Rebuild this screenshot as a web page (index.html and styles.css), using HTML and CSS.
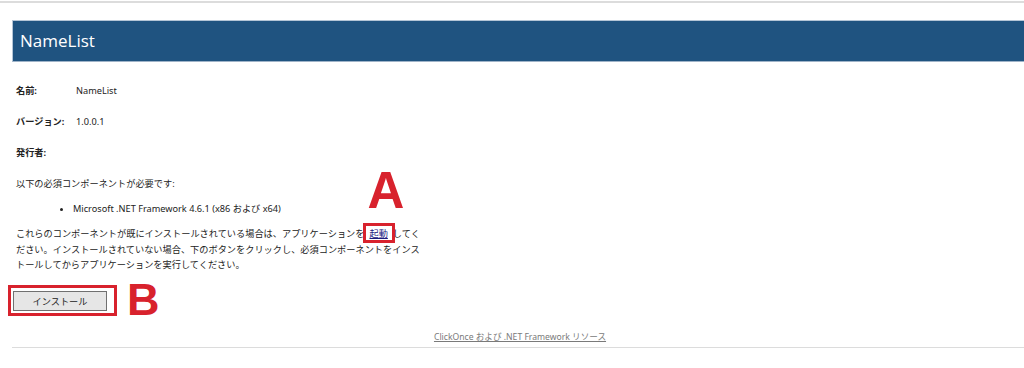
FILE: index.html
```html
<html lang="ja">
<head>
    <meta charset="UTF-8">
    <meta name="viewport" content="width=device-width, initial-scale=1.0">
    <title>NameList</title>
    <link rel="stylesheet" href="styles.css">
</head>
<body>
    <div class="top-rule"></div>
    <main class="page">
        <header class="banner">
            <h1>NameList</h1>
        </header>
        <div class="info">
            <div class="info-row"><span class="label">名前:</span><span class="value">NameList</span></div>
            <div class="info-row"><span class="label">バージョン:</span><span class="value">1.0.0.1</span></div>
            <div class="info-row"><span class="label">発行者:</span><span class="value"></span></div>
        </div>
        <p class="req">以下の必須コンポーネントが必要です:</p>
        <ul class="req-list">
            <li>Microsoft .NET Framework 4.6.1 (x86 および x64)</li>
        </ul>
        <p class="note">これらのコンポーネントが既にインストールされている場合は、アプリケーションを<a href="#" class="launch">起動<span class="mark mark-a">A</span></a>してください。インストールされていない場合、下のボタンをクリックし、必須コンポーネントをインストールしてからアプリケーションを実行してください。</p>
        <div class="install-row">
            <div class="install-box">
                <button class="button">インストール</button>
            </div>
            <span class="mark mark-b">B</span>
        </div>
        <footer class="footer">
            <a href="#" class="resources">ClickOnce および .NET Framework リソース</a>
        </footer>
        <div class="bottom-rule"></div>
    </main>
</body>
</html>
```

FILE: styles.css
```css
:root {
    --banner-bg: #1f5380;
    --banner-edge: #b4c5d6;
    --text-color: #222;
    --mark-red: #d8222d;
    --rule-color: #dcdcdc;
}
body {
    margin: 0;
    font-family: "Noto Sans", "Noto Sans CJK JP", sans-serif;
    font-size: 9.2px;
    color: var(--text-color);
    background: #fff;
    overflow: hidden;
}
.top-rule {
    margin-top: 1px;
    height: 2px;
    background: var(--rule-color);
}
.page {
    padding-left: 16px;
}
.banner {
    margin: 17px 0 0 -4px;
    height: 40px;
    background: var(--banner-bg);
    border: 1px solid var(--banner-edge);
    border-right: none;
    border-bottom-color: #9fb3c8;
}
.banner h1 {
    margin: 0;
    padding-left: 7px;
    font-family: "Open Sans", "Noto Sans", sans-serif;
    font-weight: 400;
    font-size: 17px;
    line-height: 40px;
    color: #fff;
}
.info {
    margin-top: 13px;
}
.info-row {
    display: flex;
    height: 31px;
    line-height: 31px;
}
.label {
    width: 60px;
    font-weight: bold;
}
.req {
    margin: 0;
    line-height: 31px;
}
.req-list {
    margin: 2px 0 0;
    padding-left: 57px;
    line-height: 15px;
}
.note {
    margin: 10px 0 0;
    width: 406px;
    line-height: 15.5px;
}
.launch {
    position: relative;
    margin: 0 5px;
    color: #1b1b80;
}
.launch::after {
    content: "";
    position: absolute;
    left: -6px;
    right: -7px;
    top: -4px;
    bottom: -3px;
    border: 3px solid var(--mark-red);
}
.mark {
    font-family: "Liberation Sans", Arial, sans-serif;
    font-weight: bold;
    color: var(--mark-red);
    line-height: 1;
}
.mark-a {
    position: absolute;
    left: -2px;
    top: -62px;
    font-size: 51px;
}
.install-row {
    display: flex;
    align-items: center;
    margin: 12px 0 0 -8px;
}
.install-box {
    border: 3px solid var(--mark-red);
    padding: 3px 7px 2px 2px;
}
.button {
    display: block;
    width: 94px;
    height: 20px;
    padding: 0;
    font-family: inherit;
    font-size: 9.2px;
    color: #222;
    background: #e6e6e6;
    border: 1px solid #707070;
    border-radius: 0;
}
.mark-b {
    margin-left: 10px;
    font-size: 45px;
    line-height: 30px;
}
.footer {
    margin-top: 14px;
    text-align: center;
    line-height: 14px;
}
.resources {
    font-size: 8.6px;
    color: #7a7a7a;
}
.bottom-rule {
    margin: 3px 0 0 -4px;
    height: 1px;
    background: var(--rule-color);
}
```
